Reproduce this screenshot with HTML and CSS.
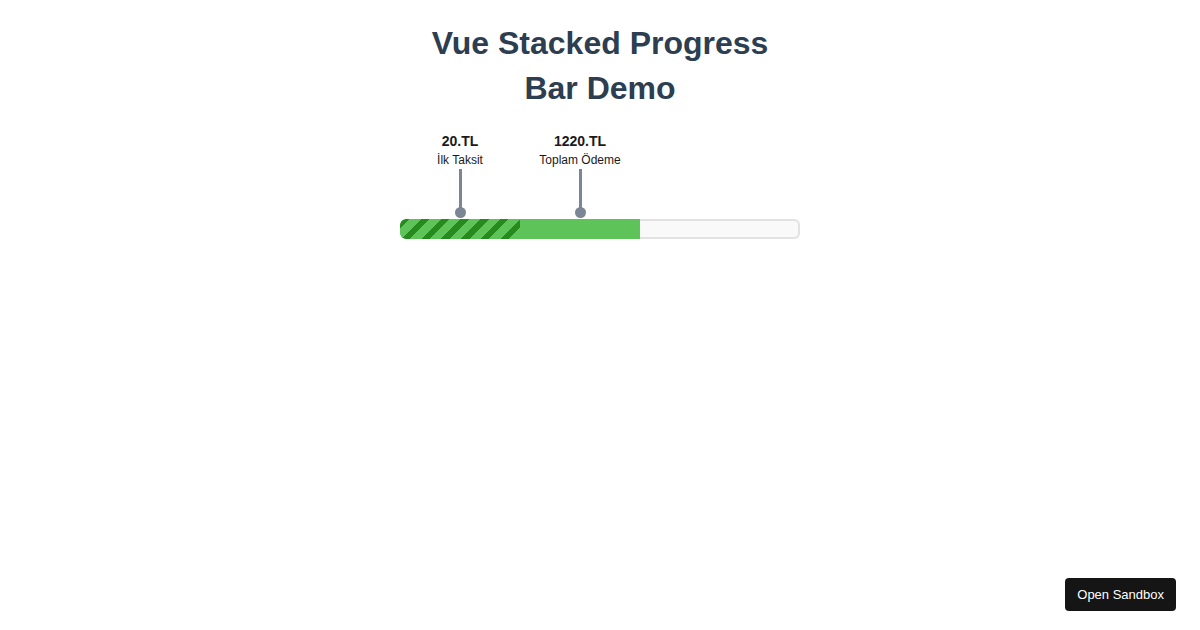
FILE: index.html
```html
<!DOCTYPE html>
<html>
<head>
  <title>Vue Stacked Progress Bar Demo</title>
  <link rel="stylesheet" href="styles.css">
</head>
<body>
  <div id="app">
    <h1>Vue Stacked Progress Bar Demo</h1>

    <div class="stacked-progress">
      <div class="markers">
        <div class="marker" style="left: 15%;">
          <div class="marker-amount">20.TL</div>
          <div class="marker-label">İlk Taksit</div>
          <div class="marker-pin"></div>
        </div>
        <div class="marker" style="left: 45%;">
          <div class="marker-amount">1220.TL</div>
          <div class="marker-label">Toplam Ödeme</div>
          <div class="marker-pin"></div>
        </div>
      </div>

      <div class="bar">
        <div class="bar-fill bar-fill-paid" style="width: 60%;">
          <div class="bar-fill bar-fill-striped" style="width: 50%;"></div>
        </div>
      </div>
    </div>
  </div>

  <a class="sandbox-button" href="#">Open Sandbox</a>
</body>
</html>
```

FILE: styles.css
```css
body {
  margin: 0;
  font-family: "Liberation Sans", Arial, Helvetica, sans-serif;
  color: #1a1a1a;
  background: #ffffff;
}

#app {
  width: 400px;
  margin: 0 auto;
  padding-top: 21px;
  text-align: center;
}

h1 {
  margin: 0;
  padding: 0 12px;
  font-size: 32px;
  line-height: 45px;
  color: #2c3e50;
}

.stacked-progress {
  margin-top: 22px;
}

.markers {
  position: relative;
  height: 85px;
}
.marker {
  position: absolute;
  top: 0;
  width: 120px;
  margin-left: -60px;
  display: flex;
  flex-direction: column;
  align-items: center;
}
.marker-amount {
  font-size: 14px;
  font-weight: bold;
  line-height: 16px;
}
.marker-label {
  margin-top: 3px;
  font-size: 12px;
  line-height: 16px;
}
.marker-pin {
  position: relative;
  width: 3px;
  height: 44px;
  margin-top: 1px;
  background: #7a8694;
}
.marker-pin::after {
  content: "";
  position: absolute;
  left: -4px;
  bottom: -5px;
  width: 11px;
  height: 11px;
  border-radius: 50%;
  background: #7a8694;
}

.bar {
  height: 20px;
  margin-top: 1px;
  border-radius: 6px;
  background: #f9f9f9;
  box-shadow: inset 0 0 0 2px #e2e2e2;
  overflow: hidden;
  display: flex;
}
.bar-fill {
  height: 100%;
  border-radius: 6px 0 0 6px;
}
.bar-fill-paid {
  background: #5ec45a;
}
.bar-fill-striped {
  background: repeating-linear-gradient(
    -45deg,
    #5ec45a 0,
    #5ec45a 8px,
    #268a1e 8px,
    #268a1e 14px
  );
}

.sandbox-button {
  position: fixed;
  right: 24px;
  bottom: 19px;
  padding: 9px 12px;
  border-radius: 4px;
  background: #151515;
  color: #ffffff;
  font-size: 13px;
  line-height: 15px;
  text-decoration: none;
}
```
